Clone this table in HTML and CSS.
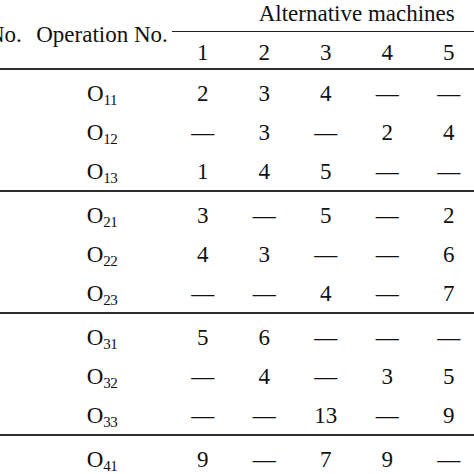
FILE: index.html
```html
<!DOCTYPE html>
<html>
<head>
<meta charset="utf-8">
<link rel="stylesheet" href="styles.css">
</head>
<body>
<table class="tbl">
  <colgroup>
    <col class="c-job">
    <col class="c-op">
    <col class="c-m"><col class="c-m"><col class="c-m"><col class="c-m"><col class="c-m">
  </colgroup>
  <thead>
    <tr class="h1">
      <th class="job-h" rowspan="2">Job No.</th>
      <th class="op-h" rowspan="2">Operation No.</th>
      <th class="alt-h" colspan="5">Alternative machines</th>
    </tr>
    <tr class="h2">
      <th>1</th><th>2</th><th>3</th><th>4</th><th>5</th>
    </tr>
  </thead>
  <tbody class="grp">
    <tr class="first"><td class="job" rowspan="3"></td><td>O<sub>11</sub></td><td>2</td><td>3</td><td>4</td><td>—</td><td>—</td></tr>
    <tr class="mid"><td>O<sub>12</sub></td><td>—</td><td>3</td><td>—</td><td>2</td><td>4</td></tr>
    <tr class="last"><td>O<sub>13</sub></td><td>1</td><td>4</td><td>5</td><td>—</td><td>—</td></tr>
  </tbody>
  <tbody class="grp">
    <tr class="first"><td class="job" rowspan="3"></td><td>O<sub>21</sub></td><td>3</td><td>—</td><td>5</td><td>—</td><td>2</td></tr>
    <tr class="mid"><td>O<sub>22</sub></td><td>4</td><td>3</td><td>—</td><td>—</td><td>6</td></tr>
    <tr class="last"><td>O<sub>23</sub></td><td>—</td><td>—</td><td>4</td><td>—</td><td>7</td></tr>
  </tbody>
  <tbody class="grp">
    <tr class="first"><td class="job" rowspan="3"></td><td>O<sub>31</sub></td><td>5</td><td>6</td><td>—</td><td>—</td><td>—</td></tr>
    <tr class="mid"><td>O<sub>32</sub></td><td>—</td><td>4</td><td>—</td><td>3</td><td>5</td></tr>
    <tr class="last"><td>O<sub>33</sub></td><td>—</td><td>—</td><td>13</td><td>—</td><td>9</td></tr>
  </tbody>
  <tbody class="grp">
    <tr class="first"><td class="job"></td><td>O<sub>41</sub></td><td>9</td><td>—</td><td>7</td><td>9</td><td>—</td></tr>
  </tbody>
</table>
</body>
</html>
```

FILE: styles.css
```css
html, body {
  margin: 0;
  padding: 0;
  background: #fff;
  overflow: hidden;
  width: 474px;
  height: 474px;
}

.tbl {
  margin-left: -60px;
  border-collapse: separate;
  border-spacing: 0;
  table-layout: fixed;
  width: 539.5px;
  font-family: "Liberation Serif", "Times New Roman", serif;
  font-size: 23px;
  line-height: 26px;
  color: #111;
}

.c-job { width: 92px; }
.c-op { width: 140px; }
.c-m { width: 61.5px; }

.tbl th,
.tbl td {
  padding: 0;
  text-align: center;
  font-weight: normal;
  white-space: nowrap;
}

.tbl th.job-h,
.tbl th.op-h {
  vertical-align: middle;
  padding-top: 2px;
  border-bottom: 2px solid #2e2e2e;
}

.tbl th.alt-h {
  padding-top: 1px;
  padding-bottom: 4px;
  padding-left: 62px;
  border-bottom: 1px solid #222;
}

.h2 th {
  padding-top: 8px;
  padding-bottom: 2px;
  border-bottom: 2px solid #2e2e2e;
}

.grp .first td {
  padding-top: 11px;
  padding-bottom: 6px;
}

.grp .mid td {
  padding-top: 6.5px;
  padding-bottom: 6.5px;
}

.grp .last td {
  padding-top: 6.5px;
  padding-bottom: 5.5px;
  border-bottom: 2px solid #2e2e2e;
}

.grp td.job {
  vertical-align: middle;
  border-bottom: 2px solid #2e2e2e;
}

.grp:last-child td.job {
  border-bottom: none;
}

.tbl sub {
  font-size: 15px;
  line-height: 0;
  vertical-align: -4px;
  letter-spacing: -0.5px;
}
```
